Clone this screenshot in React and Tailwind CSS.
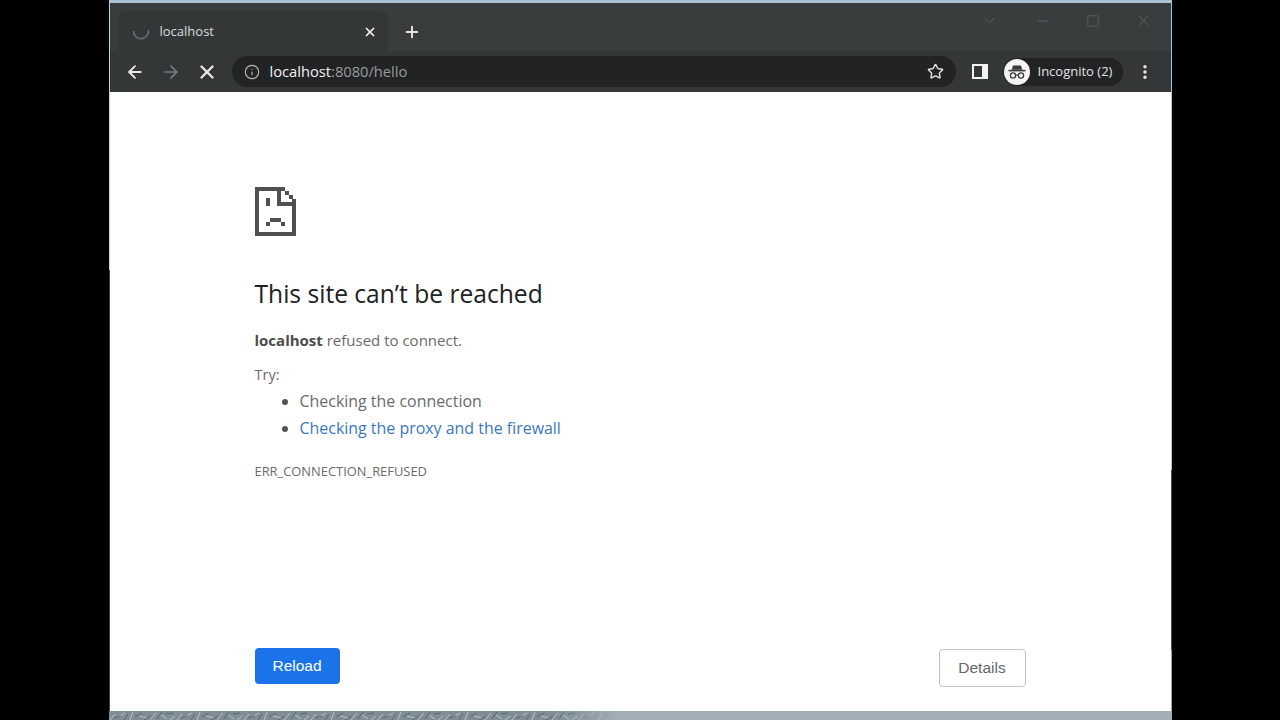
import React from 'react';
import { ArrowLeft, ArrowRight, X, Info, Star, Plus, ChevronDown, Minus, Square, EllipsisVertical } from 'lucide-react';

function SadPage() {
    return (
        <svg width="42" height="49" viewBox="0 0 42 49" fill="#505050" shapeRendering="crispEdges">
            <path d="M0 0H26V4H4V45H37V19H41V49H0Z" />
            <path d="M22 4H26V15H37V19H22Z" />
            <path d="M26 0H30V4H26ZM30 4H34V8H30ZM34 8H38V12H34ZM37 12H41V19H37Z" />
            <path d="M11 11H15V19H11Z" />
            <path d="M15 31H26V35H15ZM11 35H15V39H11ZM26 35H30V39H26Z" />
        </svg>
    );
}

function IncognitoBadge() {
    return (
        <svg width="26" height="26" viewBox="0 0 26 26">
            <circle cx="13" cy="13" r="13" fill="#f4f4f4" />
            <path d="M9 6.5h8l1.3 4.2H7.7z" fill="#3a3a3a" />
            <rect x="4.5" y="10.8" width="17" height="1.6" fill="#3a3a3a" />
            <circle cx="9" cy="16.5" r="2.6" fill="none" stroke="#3a3a3a" strokeWidth="1.3" />
            <circle cx="17" cy="16.5" r="2.6" fill="none" stroke="#3a3a3a" strokeWidth="1.3" />
            <path d="M11.5 16h3" stroke="#3a3a3a" strokeWidth="1.1" />
        </svg>
    );
}

function Spinner() {
    return (
        <svg width="18" height="18" viewBox="0 0 18 18" fill="none">
            <path d="M1.5 8a7.5 7.5 0 0 0 14.6 2.5 7.5 7.5 0 0 0 .4-3.5" stroke="#6a6e70" strokeWidth="1.6" />
        </svg>
    );
}

// grainy grass wallpaper strip under the window
function Wallpaper() {
    return (
        <svg width="1063" height="9" className="block">
            <defs>
                <pattern id="grass" width="67" height="9" patternUnits="userSpaceOnUse">
                    <rect width="67" height="9" fill="#7f8e95" />
                    <path d="M1 9L6 3M9 6L16 2M21 9L24 1M30 5L38 7M41 9L47 2M52 4L58 8M61 9L66 5" stroke="#c3ced3" strokeWidth="1" opacity="0.8" />
                    <path d="M5 7L12 5M15 9L19 3M26 6L33 2M35 9L42 5M48 8L53 1M57 3L64 2" stroke="#46545b" strokeWidth="1" opacity="0.7" />
                </pattern>
                <linearGradient id="fade" x1="0" x2="1" y1="0" y2="0">
                    <stop offset="0.42" stopColor="#a2afb6" stopOpacity="0" />
                    <stop offset="0.48" stopColor="#a2afb6" stopOpacity="1" />
                </linearGradient>
            </defs>
            <rect width="1063" height="9" fill="url(#grass)" />
            <rect width="1063" height="9" fill="url(#fade)" />
        </svg>
    );
}

export default function App() {
    return (
        <div className="w-[1280px] h-[720px] overflow-hidden bg-black flex flex-col" style={{ fontFamily: '"Open Sans", "Noto Sans", sans-serif' }}>
            <div className="flex-1 min-h-0 flex justify-center">
                <div className="w-px flex flex-col">
                    <div className="h-[270px] bg-[#b9d3e4]" />
                    <div className="flex-1 bg-[#3c3f41]" />
                </div>
                <div className="w-[1061px] flex flex-col bg-white border-t-[3px] border-t-[#a9c3d6]">
                    {/* title bar */}
                    <div className="h-[48px] shrink-0 bg-[#3a3d3e] flex items-end pl-[8px] text-[#84888a]">
                        <div className="w-[270px] h-[40px] bg-[#343738] rounded-t-lg flex items-center pl-[14px] pr-[3px] pt-[2px] text-[#dcdcdc]">
                            <Spinner />
                            <span className="ml-[10px] text-[13px] flex-1">localhost</span>
                            <X size={14} strokeWidth={3} className="text-[#f0f0f0] mr-[8px]" />
                        </div>
                        <Plus size={18} strokeWidth={2.6} className="ml-[15px] mb-[10px] text-[#e6e6e6]" />
                        <div className="flex-1 self-start flex justify-end items-center pt-[9px] pr-[19px] gap-[35px] text-[#5f6365]">
                            <ChevronDown size={17} strokeWidth={1.4} className="mr-[2px]" />
                            <Minus size={16} strokeWidth={1.4} />
                            <Square size={14} strokeWidth={1.4} />
                            <X size={17} strokeWidth={1.4} />
                        </div>
                    </div>
                    {/* toolbar */}
                    <div className="h-[41px] shrink-0 bg-[#343738] flex items-center pl-[15px] pr-[17px] text-[#e8e8e8]">
                        <ArrowLeft size={20} strokeWidth={2.2} />
                        <ArrowRight size={20} strokeWidth={2} className="ml-[16px] text-[#7a7d7f]" />
                        <X size={22} strokeWidth={2.6} className="ml-[15px]" />
                        <div className="ml-[14px] w-[724px] h-[31px] rounded-full bg-[#212324] flex items-center pl-[12px] pr-[12px]">
                            <Info size={16} strokeWidth={1.8} className="text-[#b5b5b5]" />
                            <span className="ml-[10px] text-[14.7px] flex-1">
                                <span className="text-[#f2f2f2]">localhost</span>
                                <span className="text-[#9a9c9e]">:8080/hello</span>
                            </span>
                            <Star size={17} strokeWidth={2} className="text-[#e2e2e2]" />
                        </div>
                        <div className="ml-[16px] w-[16px] h-[15px] border-l-2 border-y-2 border-r-[6px] border-[#f4f4f4] flex">
                            <div className="flex-1 bg-[#343738]" />
                        </div>
                        <div className="ml-[15px] w-[120px] h-[28px] rounded-full bg-[#212324] flex items-center pl-[1px]">
                            <IncognitoBadge />
                            <span className="ml-[8px] text-[13px] text-[#e4e4e4] whitespace-nowrap">Incognito (2)</span>
                        </div>
                        <EllipsisVertical size={18} strokeWidth={2.6} className="ml-auto" />
                    </div>
                    {/* error page */}
                    <div className="flex-1 min-h-0 bg-white flex flex-col pl-[145px] pr-[145px] pt-[95px] pb-[24px]">
                        <SadPage />
                        <h1 className="mt-[40px] text-[24.6px] leading-[36px] font-normal text-[#202124]">This site can’t be reached</h1>
                        <p className="mt-[18px] text-[15px] leading-[20px] text-[#6a6a6a]">
                            <span className="font-bold text-[#4b4b4b]">localhost</span> refused to connect.
                        </p>
                        <p className="mt-[15px] text-[14.5px] leading-[20px] text-[#6a6a6a]">Try:</p>
                        <ul className="mt-[3px] pl-[45px] list-disc text-[15.95px] leading-[27px] text-[#6a6a6a] marker:text-[#555555]">
                            <li>Checking the connection</li>
                            <li className="text-[#3b78c0] marker:text-[#555555]">Checking the proxy and the firewall</li>
                        </ul>
                        <div className="mt-[21px] text-[12.9px] leading-[16px] text-[#6a6a6a]">ERR_CONNECTION_REFUSED</div>
                        <div className="mt-auto flex items-start justify-between">
                            <button className="w-[85px] h-[36px] rounded bg-[#1a73e8] text-white text-[15.5px]" style={{ fontFamily: '"Liberation Sans", sans-serif' }}>Reload</button>
                            <button className="mt-[1px] w-[87px] h-[38px] rounded border border-[#c4c4c4] text-[#666666] text-[15.5px]" style={{ fontFamily: '"Liberation Sans", sans-serif' }}>Details</button>
                        </div>
                    </div>
                </div>
                <div className="w-px flex flex-col">
                    <div className="h-[470px] bg-[#a9c3d6]" />
                    <div className="h-[180px] bg-[#55524c]" />
                    <div className="flex-1 bg-[#9aa7ae]" />
                </div>
            </div>
            {/* wallpaper peeking under the window */}
            <div className="h-[9px] shrink-0 flex">
                <div className="w-[109px]" />
                <Wallpaper />
            </div>
        </div>
    );
}
